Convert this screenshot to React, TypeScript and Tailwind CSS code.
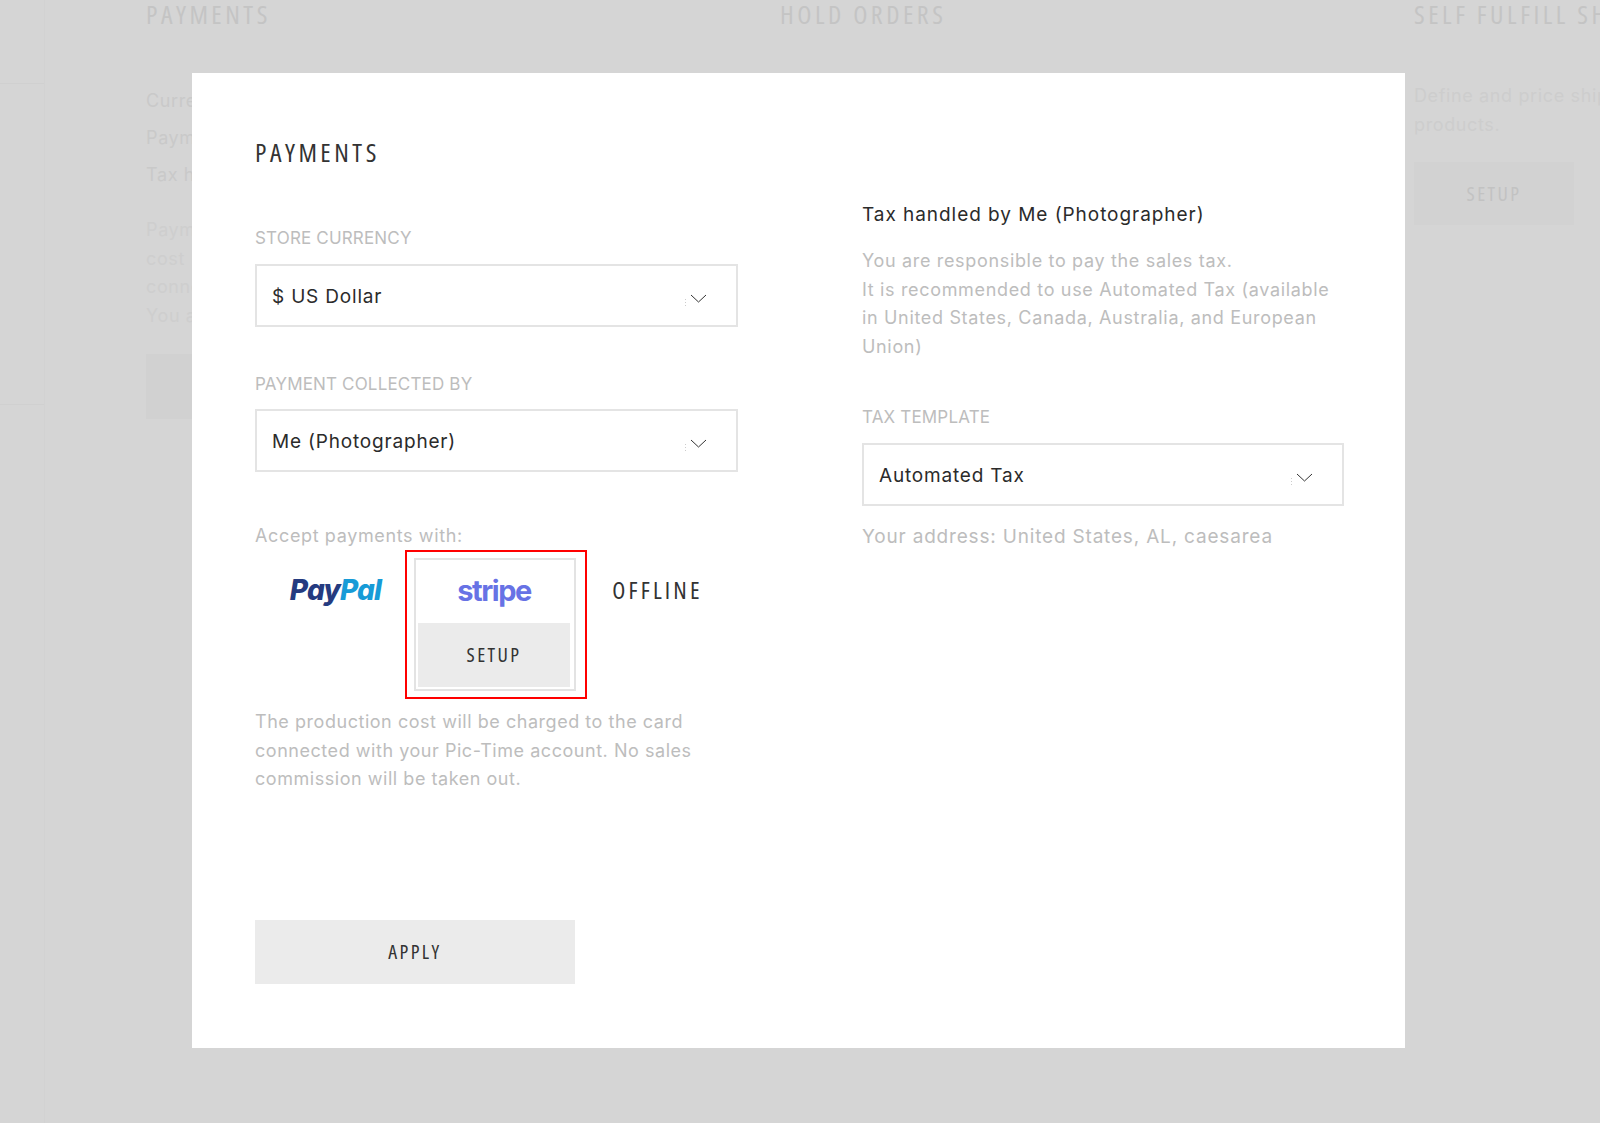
const gotham = "font-['Inter','Open_Sans',sans-serif]";
const narrow = "font-['Open_Sans',sans-serif] [font-stretch:75%] font-normal";

function Chevron() {
  return (
    <svg width="22" height="14" viewBox="0 0 22 14" fill="none" className="mt-[9px] shrink-0">
      <path d="M6 2 L13.5 9 L21 2" stroke="#333" strokeWidth="1" />
      <path d="M0.5 6v1M0.5 9v1M0.5 12v1" stroke="#ccc" strokeWidth="1" />
    </svg>
  );
}

function Select({ value }: { value: string }) {
  return (
    <div className="flex h-[63px] items-center justify-between border-2 border-[#e4e4e4] pl-[15px] pr-[29px]">
      <span className="mt-[4px] text-[19px] tracking-[0.043em] text-[#2b2b2b]">{value}</span>
      <Chevron />
    </div>
  );
}

function Label({ children, className = "" }: { children: string; className?: string }) {
  return <div className={`text-[17px] leading-[20px] tracking-[0.01em] text-[#bdbdbd] ${className}`}>{children}</div>;
}

const titleBg = `whitespace-nowrap text-[26px] leading-[28px] tracking-[0.135em] text-[#c4c4c4] ${narrow}`;

export default function App() {
  return (
    <div className={`relative h-[1123px] w-[1600px] overflow-hidden bg-[#d5d5d5] ${gotham}`}>
      <div className="flex h-full">
        <div className="w-[45px] shrink-0 border-r border-[#d2d2d2]">
          <div className="mt-[83px] h-[322px] border-y border-[#d0d0d0]" />
        </div>
        <div className="ml-[101px] w-[634px] shrink-0 text-[18px] tracking-[0.035em] text-[#c9c9c9]">
          <div className={titleBg}>PAYMENTS</div>
          <div className="mt-[59px] flex flex-col gap-[9px] leading-[28px]">
            <div>Currency</div>
            <div>Payment</div>
            <div>Tax handled</div>
          </div>
          <div className="mt-[27px] leading-[28.7px] text-[#cecece]">
            <div>Payment</div>
            <div>cost</div>
            <div>connected</div>
            <div>You are</div>
          </div>
          <div className="mt-[23px] h-[65px] w-[160px] bg-[#d1d1d1]" />
        </div>
        <div className="w-[634px] shrink-0">
          <div className={titleBg}>HOLD ORDERS</div>
        </div>
        <div className="w-[400px] shrink-0 text-[18px] tracking-[0.035em] text-[#cdcdcd]">
          <div className={titleBg}>SELF FULFILL SHIPPING</div>
          <div className="mt-[54px] w-[190px] whitespace-nowrap leading-[28.7px]">
            <div>Define and price shipping</div>
            <div>products.</div>
          </div>
          <div className={`mt-[23px] flex h-[63px] w-[160px] items-center justify-center bg-[#d2d2d2] text-[20px] tracking-[0.12em] text-[#c2c2c2] ${narrow}`}>SETUP</div>
        </div>
      </div>

      <div className="absolute left-[192px] top-[73px] flex h-[975px] w-[1213px] flex-col bg-white pl-[63px] pr-[61px] pt-[65px]">
        <div className={`text-[26px] leading-[28px] tracking-[0.135em] text-[#333] ${narrow}`}>PAYMENTS</div>
        <div className="mt-[2px] grid grid-cols-[483px_482px] gap-x-[124px]">
          <div>
            <Label className="mt-[60px] mb-[16px]">STORE CURRENCY</Label>
            <Select value="$ US Dollar" />
            <Label className="mt-[47px] mb-[15px]">PAYMENT COLLECTED BY</Label>
            <Select value="Me (Photographer)" />
            <div className="mt-[50px] text-[18px] leading-[28px] tracking-[0.035em] text-[#bdbdbd]">Accept payments with:</div>
            <div className="flex items-start">
              <div className="flex h-[149px] w-[150px] items-start justify-center pl-[11px] pt-[23px] text-[28px] font-extrabold italic leading-[34px] tracking-[-0.03em]">
                <span className="text-[#253b80]">Pay</span>
                <span className="text-[#179bd7]">Pal</span>
              </div>
              <div className="h-[149px] w-[182px] border-2 border-[#ff0000] bg-white pb-[6px] pl-[7px] pr-[9px] pt-[6px]">
                <div className="h-full w-full border-2 border-[#e3e3e3] pb-[2px] pl-[2px] pr-[4px] pt-[2px]">
                  <div className="flex h-[61px] items-center justify-center pb-[4px] text-[29px] font-bold leading-none tracking-[-0.05em] text-[#6772e5]">stripe</div>
                  <div className={`flex h-[64px] items-center justify-center bg-[#ebebeb] text-[20px] tracking-[0.12em] text-[#333] ${narrow}`}>SETUP</div>
                </div>
              </div>
              <div className={`flex h-[80px] flex-1 items-center justify-center pr-[10px] text-[24px] tracking-[0.13em] text-[#333] ${narrow}`}>OFFLINE</div>
            </div>
            <div className="mt-[9px] w-[470px] text-[18px] leading-[28.7px] tracking-[0.03em] text-[#bdbdbd]">
              The production cost will be charged to the card connected with your Pic-Time account. No sales commission will be taken out.
            </div>
            <button className={`mt-[126px] flex h-[64px] w-[320px] items-center justify-center bg-[#ebebeb] text-[20px] tracking-[0.12em] text-[#333] ${narrow}`}>APPLY</button>
          </div>
          <div>
            <div className="mt-[33px] text-[19px] leading-[28px] tracking-[0.05em] text-[#2b2b2b]">Tax handled by Me (Photographer)</div>
            <div className="mt-[18px] text-[18px] leading-[28.7px] tracking-[0.037em] text-[#bdbdbd]">
              You are responsible to pay the sales tax.<br />
              It is recommended to use Automated Tax (available in United States, Canada, Australia, and European Union)
            </div>
            <Label className="mt-[45px] mb-[16px]">TAX TEMPLATE</Label>
            <Select value="Automated Tax" />
            <div className="mt-[17px] text-[19px] leading-[28px] tracking-[0.043em] text-[#bdbdbd]">Your address: United States, AL, caesarea</div>
          </div>
        </div>
      </div>
    </div>
  );
}
